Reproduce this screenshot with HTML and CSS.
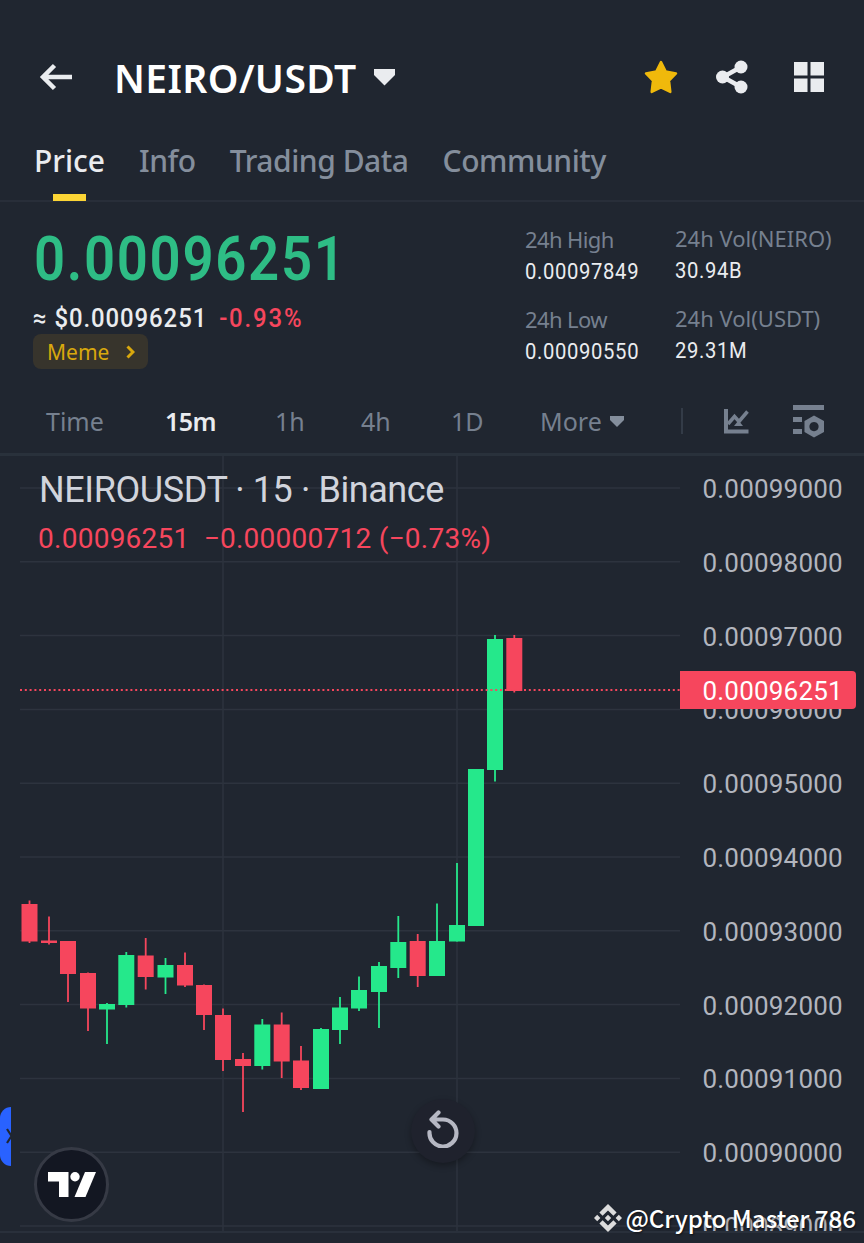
FILE: index.html
```html
<!DOCTYPE html>
<html lang="en">
<head>
    <meta charset="UTF-8">
    <meta name="viewport" content="width=device-width, initial-scale=1.0">
    <title>NEIRO/USDT</title>
    <link rel="stylesheet" href="styles.css">
</head>
<body>

<header class="header">
    <svg class="back" width="34" height="28" viewBox="0 0 34 28" fill="none" stroke="#eaecef" stroke-width="4.5">
        <path d="M33 14H4M15.5 2.5L4 14l11.5 11.5"/>
    </svg>
    <h1>NEIRO/USDT</h1>
    <svg class="caret" width="21" height="17" viewBox="0 0 21 17" fill="#eaecef"><path d="M0 0h21v6L10.5 16.5 0 6z"/></svg>
    <div class="actions">
        <svg width="34" height="34" viewBox="0 0 34 34" fill="#f0b90b" stroke="#f0b90b" stroke-width="2.5" stroke-linejoin="round">
            <path d="M17 2l4.600 9.400 10.400 2-7 7.200 1.300 11.400L17 27.300 7.700 32 9 20.600 2 13.400l10.400-2z"/>
        </svg>
        <svg width="32" height="34" viewBox="0 0 32 34" fill="#eaecef">
            <path d="M25 7L7 17l18 10" fill="none" stroke="#eaecef" stroke-width="4.5"/>
            <circle cx="25" cy="7" r="6.5"/><circle cx="6.5" cy="17" r="6.5"/><circle cx="25" cy="27" r="6.5"/>
        </svg>
        <svg width="30" height="30" viewBox="0 0 30 30" fill="#eaecef">
            <path d="M0 0h13.5v13.5H0zM16.5 0H30v13.5H16.5zM0 16.5h13.5V30H0zM16.5 16.5H30V30H16.5z"/>
        </svg>
    </div>
</header>

<nav class="tabs">
    <a class="active">Price</a>
    <a>Info</a>
    <a>Trading Data</a>
    <a>Community</a>
</nav>

<section class="ticker">
    <div class="last">
        <div class="price">0.00096251</div>
        <div class="fiat"><span>≈ $0.00096251</span><span class="down">-0.93%</span></div>
        <div class="tag">
            <span>Meme</span>
            <svg width="9" height="14" viewBox="0 0 9 14" fill="none" stroke="#d9a80d" stroke-width="3"><path d="M1.5 1.5L7 7l-5.500 5.500"/></svg>
        </div>
    </div>
    <dl class="stats range">
        <dt>24h High</dt><dd>0.00097849</dd>
        <dt>24h Low</dt><dd>0.00090550</dd>
    </dl>
    <dl class="stats volume">
        <dt>24h Vol(NEIRO)</dt><dd>30.94B</dd>
        <dt>24h Vol(USDT)</dt><dd>29.31M</dd>
    </dl>
</section>

<nav class="intervals">
    <a class="w-time">Time</a>
    <a class="w-15m active">15m</a>
    <a class="w-1h">1h</a>
    <a class="w-4h">4h</a>
    <a class="w-1d">1D</a>
    <a class="w-more">More <svg width="14" height="11" viewBox="0 0 14 11" fill="#848e9c"><path d="M0 0h14v4L7 11 0 4z"/></svg></a>
    <i class="divider"></i>
    <svg class="draw" width="25" height="25" viewBox="0 0 25 25" fill="none" stroke="#76808f" stroke-width="4">
        <path d="M2 0v22.500h22.500"/>
        <path d="M4 15l6.500-7.500 4.500 5L23.500 2.500" stroke-width="3.500"/>
        <path d="M14.500 11.500l4.500 5.500h-9z" fill="#76808f" stroke="none"/>
    </svg>
    <svg class="settings" width="31" height="33" viewBox="0 0 31 33" fill="#76808f">
        <path d="M0 0h31v5H0zM0 12h9v5H0zM0 24h9v5H0z"/>
        <path fill-rule="evenodd" d="M21 10.500l10 5.500v11l-10 5.500-9.500-5.500V16zM21 17a4.600 4.600 0 1 0 .01 0z"/>
    </svg>
</nav>

<main class="chart">
    <svg id="plot" class="plot" width="680" height="779" viewBox="0 454 680 779"></svg>
    <div id="axis" class="axis"></div>
    <div class="legend">
        <div class="symbol">NEIROUSDT · 15 · Binance</div>
        <div class="change"><span>0.00096251</span><span>−0.00000712 (−0.73%)</span></div>
    </div>
    <div class="price-tag">0.00096251</div>
    <div class="drawer">
        <svg width="6" height="16" viewBox="0 0 6 16" fill="none" stroke="#202630" stroke-width="2.200"><path d="M1 1l4.500 7L1 15"/></svg>
    </div>
    <div class="tv-logo">
        <svg width="48" height="25" viewBox="0 0 48 25" fill="#fff">
            <path d="M0 0h20.500v25H11V9.500H0z"/><circle cx="27" cy="4.700" r="4.700"/><path d="M37 0h11L37.500 25h-11z"/>
        </svg>
    </div>
    <div class="reset">
        <svg width="32" height="38" viewBox="0 0 32 38" fill="none" stroke="#b6b8c3" stroke-width="4.200" stroke-linecap="round" stroke-linejoin="round">
            <path d="M2.500 22A13.500 13.500 0 1 0 16 9.500H5M11.500 2.500L4.500 9.500l7 7"/>
        </svg>
    </div>
</main>

<div class="watermark">
    <svg width="28" height="28" viewBox="0 0 28 28" fill="#dcdcdc">
        <path d="M14 0l8.600 8.600-3.200 3.200L14 6.400l-5.400 5.400-3.200-3.200zM14 28l8.600-8.600-3.200-3.200-5.400 5.400-5.400-5.400-3.200 3.200zM0 14l3.200-3.200L6.400 14l-3.200 3.200zM21.600 14l3.200-3.200L28 14l-3.200 3.200zM10.800 14l3.200-3.200 3.200 3.200-3.200 3.200z"/>
    </svg>
    <span>@Crypto Master 786</span>
</div>

<script>
    // x, high, body top, body bottom, low, direction
    const candles = [
        [29.5, 900.5, 904, 941.5, 943, 'down'],
        [49, 916.5, 940.5, 943, 944.5, 'down'],
        [68, 941, 941, 974, 1002, 'down'],
        [88, 972.5, 973, 1008.5, 1031, 'down'],
        [107, 1003, 1004, 1009.5, 1044, 'up'],
        [126.3, 952, 955, 1005, 1007.5, 'up'],
        [145.7, 938, 955.5, 977, 989.5, 'down'],
        [165.5, 958, 965, 977.5, 994, 'up'],
        [185, 952.5, 965, 985.5, 987, 'down'],
        [204, 984.5, 985, 1015, 1030, 'down'],
        [223, 1008.5, 1015, 1060, 1071, 'down'],
        [243, 1053, 1059, 1066, 1112, 'down'],
        [262.3, 1019, 1024.5, 1066, 1069.5, 'up'],
        [281.7, 1012.5, 1024.5, 1061.5, 1078, 'down'],
        [301, 1046, 1060.5, 1088, 1090, 'down'],
        [321, 1028, 1029, 1089, 1089, 'up'],
        [340, 997, 1007.5, 1030, 1044, 'up'],
        [359, 976.5, 990, 1008.5, 1011, 'up'],
        [379, 962, 966, 992, 1028, 'up'],
        [398.3, 916, 942, 968, 978, 'up'],
        [417.7, 934, 941, 976, 987, 'down'],
        [437, 903.5, 941, 976, 976, 'up'],
        [457, 863, 925, 941.5, 941.5, 'up'],
        [476, 769, 769, 926, 926, 'up'],
        [495, 635, 639, 770, 781.5, 'up'],
        [514.3, 635, 638, 691, 692.5, 'down']
    ];

    const step = 73.8;
    let grid = '';
    let labels = '';
    for (let i = 0; i <= 10; i++) {
        const y = 488 + i * step;
        grid += `<line class="grid" x1="20" x2="680" y1="${y}" y2="${y}"/>`;
        labels += `<span>${((99 - i) / 100000).toFixed(8)}</span>`;
    }
    [223, 457].forEach(x => {
        grid += `<line class="grid" x1="${x}" x2="${x}" y1="454" y2="1233"/>`;
    });

    const bars = candles.map(([x, high, top, bottom, low, dir]) =>
        `<g class="${dir}"><rect x="${x - 0.9}" y="${high}" width="1.8" height="${low - high}"/>` +
        `<rect x="${x - 8}" y="${top}" width="16" height="${bottom - top}"/></g>`
    ).join('');

    document.getElementById('plot').innerHTML =
        grid + bars + '<line class="last-line" x1="20" x2="680" y1="690" y2="690"/>';
    document.getElementById('axis').innerHTML = labels;
</script>

</body>
</html>
```
FILE: styles.css
```css
* {
    box-sizing: border-box;
}

body {
    margin: 0;
    width: 864px;
    height: 1243px;
    overflow: hidden;
    position: relative;
    background-color: #202630;
    color: #eaecef;
    font-family: "Noto Sans", sans-serif;
}

svg {
    display: block;
    flex: none;
}

/* Header */
.header {
    display: flex;
    align-items: center;
    height: 120px;
    padding: 34px 40px 0 39px;
}

.header h1 {
    margin: 1px 0 0 41px;
    width: 243px;
    font-size: 39px;
    font-weight: 600;
    line-height: 50px;
    letter-spacing: 0.4px;
    color: #fff;
    white-space: nowrap;
}

.header .caret {
    margin-left: 17px;
}

.actions {
    display: flex;
    align-items: center;
    margin-left: auto;
    gap: 38px;
}

.actions svg:last-child {
    margin-left: 8px;
}

/* Tabs */
.tabs {
    display: flex;
    gap: 34px;
    height: 82px;
    padding: 20px 34px 0;
    border-bottom: 2px solid #282e39;
    font-size: 30px;
    font-weight: 500;
    line-height: 42px;
    letter-spacing: -0.45px;
    color: #848e9c;
    white-space: nowrap;
}

.tabs a {
    position: relative;
}

.tabs .active {
    color: #eaecef;
    letter-spacing: 0;
}

.tabs .active::after {
    content: "";
    position: absolute;
    left: 19px;
    bottom: -1px;
    width: 33px;
    height: 7px;
    background-color: #fcd535;
}

/* Ticker */
.ticker {
    display: grid;
    grid-template-columns: 492px 150px 1fr;
    height: 188px;
    padding: 22px 0 0 33px;
    white-space: nowrap;
}

/* Narrow figures */
.price,
.fiat,
.stats dd {
    transform-origin: 0 50%;
}

.price {
    height: 70px;
    padding-left: 1px;
    font: 600 62px/70px Roboto, sans-serif;
    letter-spacing: 1.9px;
    transform: scaleX(0.88);
    color: #2ebd85;
}

.fiat {
    display: flex;
    gap: 13px;
    height: 40px;
    font: 500 26px/48px Roboto, sans-serif;
    letter-spacing: 1px;
    transform: scaleX(0.92);
}

.down {
    color: #f6465d;
}

.fiat .down {
    letter-spacing: 2px;
}

.tag {
    display: flex;
    align-items: center;
    justify-content: space-between;
    width: 115px;
    height: 35px;
    padding: 0 13px 0 14px;
    border-radius: 8px;
    background-color: #37342c;
    color: #d9a80d;
    font-size: 21px;
}

.stats {
    margin: 0;
    font-size: 22px;
}

.range dt {
    letter-spacing: -0.6px;
}

.volume {
    margin-top: -1px;
}

.stats dt {
    height: 32px;
    line-height: 30px;
    color: #76808f;
}

.stats dd {
    margin: 0 0 17px;
    height: 31px;
    font: 400 22px/31px Roboto, sans-serif;
    letter-spacing: 0.7px;
    transform: scaleX(0.92);
}

/* Intervals */
.intervals {
    display: flex;
    align-items: center;
    height: 63px;
    padding: 0 0 1px 46px;
    font: 400 25px/40px "Noto Sans", sans-serif;
    color: #76808f;
    white-space: nowrap;
}

.intervals .active {
    color: #eaecef;
    font-weight: 600;
    letter-spacing: -0.5px;
}

.w-time { width: 119px; }
.w-15m { width: 110px; }
.w-1h { width: 86px; }
.w-4h { width: 90px; }
.w-1d { width: 89px; }

.w-more {
    display: flex;
    align-items: center;
    justify-content: space-between;
    width: 84px;
}

.divider {
    width: 2px;
    height: 26px;
    margin: 0 41px 0 57px;
    background-color: #333b47;
}

.draw {
    margin-right: 44px;
}

/* Chart */
.chart {
    position: relative;
    display: flex;
    height: 780px;
    overflow: hidden;
    border-top: 3px solid #29313b;
    border-bottom: 2px solid #29303b;
    font-family: Roboto, sans-serif;
}

.plot {
    margin-top: -2px;
}

.grid {
    stroke: #2d333e;
    stroke-width: 1.5;
}

.up {
    fill: #25e88b;
}

.plot .down {
    fill: #f6465d;
}

.last-line {
    stroke: #f6465d;
    stroke-width: 1.8;
    stroke-dasharray: 2 2.8;
}

.axis {
    width: 184px;
    margin-top: -4px;
    padding-left: 22.5px;
    font-size: 26px;
    letter-spacing: 0.2px;
    color: #b2b5be;
}

.axis span {
    display: block;
    height: 73.8px;
    line-height: 74.6px;
}

.legend {
    position: absolute;
    left: 39px;
    top: 12px;
    white-space: nowrap;
}

.symbol {
    font-size: 36px;
    line-height: 44px;
    letter-spacing: -0.42px;
    color: #d1d4dc;
}

.change {
    display: flex;
    gap: 14px;
    margin-left: -1px;
    font-size: 28px;
    line-height: 54px;
    letter-spacing: 0.26px;
    color: #f6465d;
}

.price-tag {
    position: absolute;
    left: 680px;
    top: 215px;
    width: 176px;
    height: 38px;
    padding-left: 22.5px;
    border-radius: 0 4px 4px 0;
    background-color: #f6465d;
    color: #fff;
    font-size: 26px;
    line-height: 40px;
    letter-spacing: 0.2px;
}

.drawer {
    position: absolute;
    left: 0;
    top: 651px;
    width: 11px;
    height: 59px;
    padding: 21px 0 0 6px;
    border-radius: 11px 0 0 11px;
    background-color: #2962ff;
}

.tv-logo {
    position: absolute;
    left: 34px;
    top: 691px;
    display: flex;
    align-items: center;
    justify-content: center;
    width: 75px;
    height: 75px;
    border: 3px solid #363a45;
    border-radius: 50%;
    background-color: #131722;
}

.reset {
    position: absolute;
    left: 411px;
    top: 643px;
    display: flex;
    align-items: center;
    justify-content: center;
    width: 64px;
    height: 64px;
    padding-bottom: 4px;
    border-radius: 50%;
    background-color: #1f222d;
    box-shadow: 0 3px 6px rgba(0, 0, 0, 0.3);
}

.watermark {
    position: absolute;
    right: 8px;
    bottom: 7px;
    display: flex;
    align-items: center;
    gap: 3px;
    font: 500 24.1px/36px "Noto Sans CJK SC", sans-serif;
    color: #fff;
    white-space: nowrap;
    text-shadow: 1px 1px 2px rgba(0, 0, 0, 0.6);
}
```
